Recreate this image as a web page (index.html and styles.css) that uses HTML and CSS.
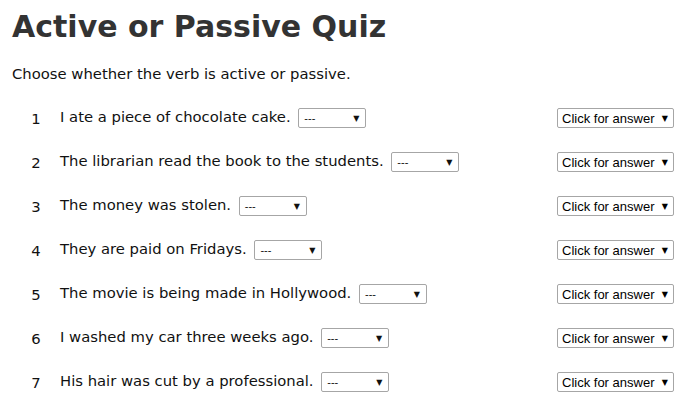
FILE: index.html
```html
<!DOCTYPE html>
<html lang="en">
<head>
    <title>Active or Passive Quiz</title>
    <link rel="stylesheet" href="styles.css">
</head>
<body>
    <h1 class="title">Active or Passive Quiz</h1>
    <p class="intro">Choose whether the verb is active or passive.</p>
    <div class="quiz">
        <div class="row">
            <span class="num">1</span>
            <span class="sentence">I ate a piece of chocolate cake. <span class="pick"><span>---</span><span class="arrow">&#9660;</span></span></span>
            <span class="answer"><span>Click for answer</span><span class="arrow">&#9660;</span></span>
        </div>
        <div class="row">
            <span class="num">2</span>
            <span class="sentence">The librarian read the book to the students. <span class="pick"><span>---</span><span class="arrow">&#9660;</span></span></span>
            <span class="answer"><span>Click for answer</span><span class="arrow">&#9660;</span></span>
        </div>
        <div class="row">
            <span class="num">3</span>
            <span class="sentence">The money was stolen. <span class="pick"><span>---</span><span class="arrow">&#9660;</span></span></span>
            <span class="answer"><span>Click for answer</span><span class="arrow">&#9660;</span></span>
        </div>
        <div class="row">
            <span class="num">4</span>
            <span class="sentence">They are paid on Fridays. <span class="pick"><span>---</span><span class="arrow">&#9660;</span></span></span>
            <span class="answer"><span>Click for answer</span><span class="arrow">&#9660;</span></span>
        </div>
        <div class="row">
            <span class="num">5</span>
            <span class="sentence">The movie is being made in Hollywood. <span class="pick"><span>---</span><span class="arrow">&#9660;</span></span></span>
            <span class="answer"><span>Click for answer</span><span class="arrow">&#9660;</span></span>
        </div>
        <div class="row">
            <span class="num">6</span>
            <span class="sentence">I washed my car three weeks ago. <span class="pick"><span>---</span><span class="arrow">&#9660;</span></span></span>
            <span class="answer"><span>Click for answer</span><span class="arrow">&#9660;</span></span>
        </div>
        <div class="row">
            <span class="num">7</span>
            <span class="sentence">His hair was cut by a professional. <span class="pick"><span>---</span><span class="arrow">&#9660;</span></span></span>
            <span class="answer"><span>Click for answer</span><span class="arrow">&#9660;</span></span>
        </div>
    </div>
</body>
</html>
```

FILE: styles.css
```css
body {
    margin: 0;
    padding: 0 14px 0 12px;
    font-family: "DejaVu Sans", Verdana, sans-serif;
    font-size: 14.8px;
    color: #111;
    background: white;
}

h1.title {
    font-size: 30px;
    font-weight: bold;
    color: #333;
    margin: 8px 0 0 0;
    line-height: 38px;
}

p.intro {
    margin: 19px 0 0 0;
    line-height: 18px;
}

.quiz {
    margin-top: 13px;
}

.row {
    display: flex;
    align-items: center;
    height: 44px;
}

.num {
    width: 48px;
    text-align: center;
}

.sentence {
    flex: 1;
}

.pick {
    display: inline-flex;
    align-items: center;
    justify-content: space-between;
    width: 68px;
    height: 20px;
    box-sizing: border-box;
    border: 1px solid #a6a6a6;
    border-radius: 2px;
    padding: 0 6px 0 5px;
    margin-left: 3px;
    font-size: 11px;
    vertical-align: middle;
    font-family: "Liberation Sans", Arial, sans-serif;
}

.arrow {
    font-size: 8px;
    font-family: "DejaVu Sans", sans-serif;
}

.answer {
    display: inline-flex;
    align-items: center;
    justify-content: space-between;
    width: 117px;
    height: 20px;
    box-sizing: border-box;
    border: 1px solid #a6a6a6;
    border-radius: 2px;
    padding: 0 5px 0 4px;
    margin-right: -1px;
    font-family: "Liberation Sans", Arial, sans-serif;
    font-size: 13px;
    color: #000;
}
```
